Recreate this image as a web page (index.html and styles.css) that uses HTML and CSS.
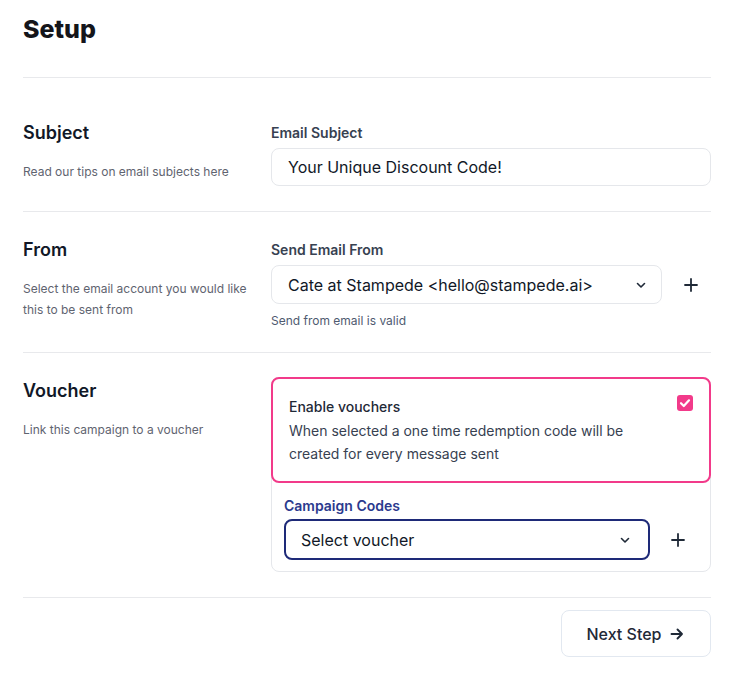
FILE: index.html
```html
<!DOCTYPE html>
<html lang="en">
<head>
<meta charset="utf-8">
<title>Setup</title>
<link rel="stylesheet" href="styles.css">
</head>
<body>
<div class="page">
  <header class="header">
    <h1 class="title">Setup</h1>
  </header>

  <section class="section section-subject">
    <div class="side">
      <h2 class="side-title">Subject</h2>
      <p class="side-desc">Read our tips on email subjects here</p>
    </div>
    <div class="main">
      <label class="label">Email Subject</label>
      <div class="input">Your Unique Discount Code!</div>
    </div>
  </section>

  <section class="section section-from">
    <div class="side">
      <h2 class="side-title">From</h2>
      <p class="side-desc">Select the email account you would like this to be sent from</p>
    </div>
    <div class="main">
      <label class="label">Send Email From</label>
      <div class="row">
        <div class="select">
          <span>Cate at Stampede &lt;hello@stampede.ai&gt;</span>
          <svg class="chev" width="12" height="12" viewBox="0 0 12 12"><path d="M2.5 4.5 6 8l3.5-3.5" fill="none" stroke="#1f2937" stroke-width="1.6" stroke-linecap="round" stroke-linejoin="round"/></svg>
        </div>
        <button class="plus plus-from" aria-label="Add">
          <svg width="16" height="16" viewBox="0 0 16 16"><path d="M8 2v12M2 8h12" stroke="#1f2937" stroke-width="1.8" stroke-linecap="round"/></svg>
        </button>
      </div>
      <p class="helper">Send from email is valid</p>
    </div>
  </section>

  <section class="section section-voucher">
    <div class="side">
      <h2 class="side-title">Voucher</h2>
      <p class="side-desc">Link this campaign to a voucher</p>
    </div>
    <div class="main">
      <div class="voucher-box">
        <div class="voucher-card">
          <div class="voucher-text">
            <div class="voucher-title">Enable vouchers</div>
            <div class="voucher-desc">When selected a one time redemption code will be created for every message sent</div>
          </div>
          <span class="checkbox">
            <svg width="16" height="16" viewBox="0 0 16 16"><path d="M4 8.2 6.8 11 12 5.3" fill="none" stroke="#fff" stroke-width="2.2" stroke-linecap="round" stroke-linejoin="round"/></svg>
          </span>
        </div>
        <div class="codes">
          <label class="label label-codes">Campaign Codes</label>
          <div class="row">
            <div class="select select-focus">
              <span>Select voucher</span>
              <svg class="chev" width="12" height="12" viewBox="0 0 12 12"><path d="M2.5 4.5 6 8l3.5-3.5" fill="none" stroke="#1f2937" stroke-width="1.6" stroke-linecap="round" stroke-linejoin="round"/></svg>
            </div>
            <button class="plus plus-codes" aria-label="Add">
              <svg width="16" height="16" viewBox="0 0 16 16"><path d="M8 2v12M2 8h12" stroke="#1f2937" stroke-width="1.8" stroke-linecap="round"/></svg>
            </button>
          </div>
        </div>
      </div>
    </div>
  </section>

  <footer class="footer">
    <button class="next">Next Step
      <svg width="16" height="16" viewBox="0 0 16 16"><path d="M2.5 8h10.5M8.5 3.5 13 8l-4.5 4.5" fill="none" stroke="#1f2937" stroke-width="1.9" stroke-linecap="round" stroke-linejoin="round"/></svg>
    </button>
  </footer>
</div>
</body>
</html>
```

FILE: styles.css
```css
* { box-sizing: border-box; }

body {
  margin: 0;
  background: #ffffff;
  font-family: Inter, "Noto Sans", sans-serif;
  color: #111827;
}

.page {
  width: 711px;
  padding-left: 23px;
}

.header {
  padding-top: 13px;
  padding-bottom: 32px;
  border-bottom: 1px solid #e8e9ec;
  margin-bottom: 17px;
}

.title {
  margin: 0;
  font-size: 25px;
  line-height: 32px;
  font-weight: 800;
  letter-spacing: 0;
  color: #14151a;
}

.section {
  display: grid;
  grid-template-columns: 248px 1fr;
  padding: 24px 0 24px;
  border-bottom: 1px solid #e8e9ec;
}

.section-subject {
  padding-bottom: 25px;
}

.section-from {
  padding-bottom: 23px;
}

.section-voucher {
  padding-bottom: 24px;
}

.side {
  padding-right: 16px;
}

.side-title {
  margin: 0;
  font-size: 18px;
  line-height: 28px;
  font-weight: 600;
  color: #111827;
}

.side-desc {
  margin: 14px 0 0;
  font-size: 12px;
  line-height: 21px;
  color: #5f6470;
}

.main {
  min-width: 0;
}

.label {
  display: block;
  margin-top: 4px;
  font-size: 14px;
  line-height: 20px;
  font-weight: 600;
  color: #374151;
}

.input {
  margin-top: 5px;
  height: 38px;
  border: 1px solid #e5e7eb;
  border-radius: 8px;
  padding: 0 16px;
  display: flex;
  align-items: center;
  font-size: 16px;
  color: #111827;
}

.row {
  display: flex;
  align-items: center;
}

.select {
  flex: 1;
  height: 39px;
  margin-top: 5px;
  border: 1px solid #e5e7eb;
  border-radius: 8px;
  padding: 0 14px 0 16px;
  display: flex;
  align-items: center;
  justify-content: space-between;
  font-size: 16px;
  color: #111827;
}

.chev { flex: none; }

.plus {
  flex: none;
  border: 0;
  background: transparent;
  padding: 0;
  display: flex;
  align-items: center;
  justify-content: center;
}

.plus-from {
  width: 41px;
  height: 39px;
  margin-left: 8px;
  margin-top: 5px;
}

.helper {
  margin: 9px 0 0;
  font-size: 12px;
  line-height: 16px;
  color: #4f5b70;
}

.voucher-box {
  border: 1px solid #e5e7eb;
  border-radius: 8px;
  margin-bottom: 1px;
}

.voucher-card {
  margin: -1px -1px 0;
  border: 2px solid #f23a8a;
  border-radius: 8px;
  padding: 16px;
  display: flex;
  align-items: flex-start;
  gap: 16px;
}

.voucher-text {
  flex: 1;
}

.voucher-title {
  font-size: 14px;
  line-height: 24px;
  font-weight: 500;
  color: #1f2937;
}

.voucher-desc {
  font-size: 14px;
  line-height: 23px;
  color: #374151;
}

.checkbox {
  flex: none;
  width: 16px;
  height: 16px;
  border-radius: 3px;
  background: #f23a8a;
  display: flex;
}

.codes {
  padding: 13px 4px 11px 12px;
}

.label-codes {
  margin-top: 0;
  color: #2b3a8e;
}

.select-focus {
  margin-top: 3px;
  height: 41px;
  border: 2px solid #1e2a78;
  padding: 0 17px 0 15px;
}

.plus-codes {
  width: 56px;
  height: 41px;
  margin-top: 3px;
}

.footer {
  padding-top: 12px;
  display: flex;
  justify-content: flex-end;
}

.next {
  width: 150px;
  height: 47px;
  border: 1px solid #e2e8f0;
  border-radius: 8px;
  background: #fff;
  font-family: Inter, "Noto Sans", sans-serif;
  font-size: 16px;
  font-weight: 500;
  color: #1f2937;
  display: flex;
  align-items: center;
  justify-content: center;
  gap: 8px;
  padding: 0;
}
```
